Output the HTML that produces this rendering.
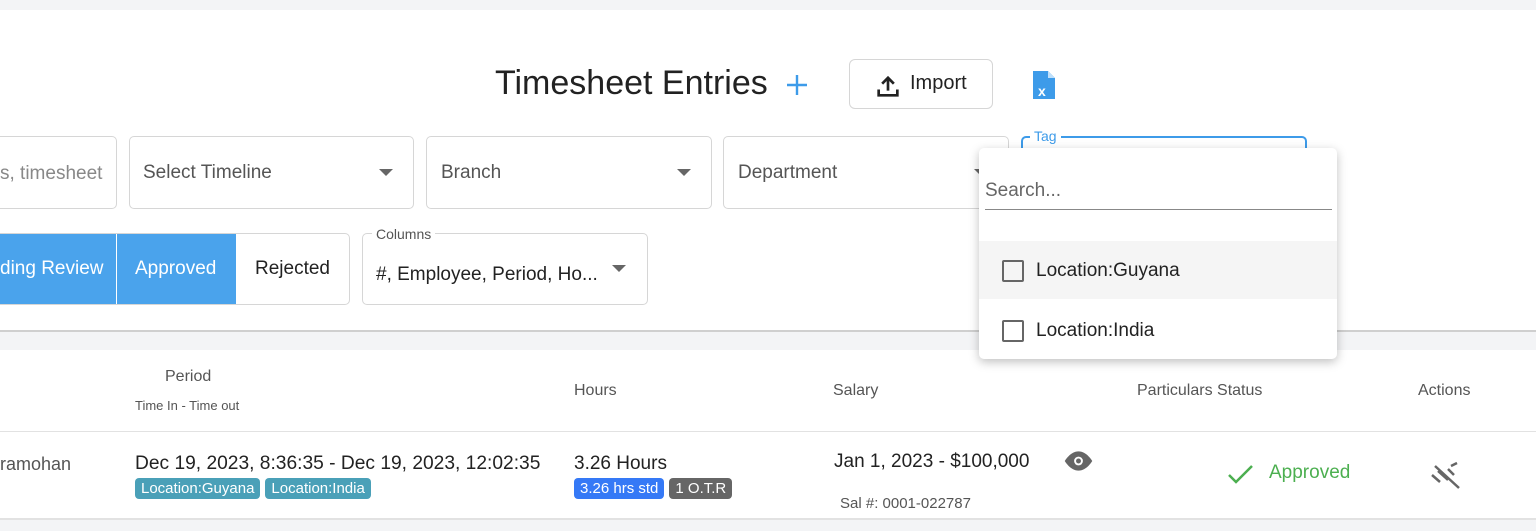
<!DOCTYPE html>
<html><head><style>
body{margin:0;width:1536px;height:531px;overflow:hidden;background:#f3f4f6;font-family:"Liberation Sans",Roboto,sans-serif;position:relative;color:#222}
.a{position:absolute}
.box{position:absolute;border:1px solid #d6d6d6;border-radius:5px;background:#fff;box-sizing:border-box}
.lbl{position:absolute;font-size:19px;color:#555}
.arr{position:absolute;width:0;height:0;border-left:7px solid transparent;border-right:7px solid transparent;border-top:7px solid #666}
.tag{display:inline-block;color:#fff;font-size:15px;padding:2px 6px;border-radius:4px;margin-right:5px}
.cb{position:absolute;left:1002px;width:18px;height:18px;border:2px solid #666;border-radius:2px}
</style></head><body>
<div class="a" style="left:0;top:10px;width:1536px;height:320px;background:#fff;border-bottom:2px solid #cfcfcf"></div>
<div class="a" style="left:0;top:350px;width:1536px;height:168px;background:#fff"></div>
<div class="a" style="left:0;top:431px;width:1536px;height:1px;background:#e2e2e2"></div>
<div class="a" style="left:0;top:518px;width:1536px;height:2px;background:#e2e2e2"></div>

<div class="a" style="left:495px;top:64px;font-size:34px;color:#222">Timesheet Entries</div>
<svg class="a" style="left:786px;top:74px" width="22" height="22" viewBox="0 0 22 22"><path d="M11 1v20M1 11h20" stroke="#3d9be9" stroke-width="2.4"/></svg>
<div class="box" style="left:849px;top:59px;width:144px;height:50px;border-radius:6px"></div>
<svg class="a" style="left:874px;top:72px" width="28" height="28" viewBox="0 0 24 24"><path d="M12 16V5M7 10l5-5 5 5M4 15v5h16v-5" fill="none" stroke="#222" stroke-width="2.3"/></svg>
<div class="a" style="left:910px;top:72px;font-size:20px">Import</div>
<svg class="a" style="left:1033px;top:71px" width="22" height="28" viewBox="0 0 22 28"><path d="M0 0h15l7 7v21H0z" fill="#3d9be9"/><path d="M15 0v7h7" fill="#bfe0fb"/><text x="5" y="25" font-size="14" font-weight="bold" fill="#fff" font-family="Liberation Sans">x</text></svg>

<div class="box" style="left:-10px;top:136px;width:127px;height:73px"></div>
<div class="lbl" style="left:0;top:163px;color:#888;width:104px;overflow:hidden;white-space:nowrap">s, timesheet</div>
<div class="box" style="left:129px;top:136px;width:285px;height:73px"></div><div class="lbl" style="left:143px;top:162px">Select Timeline</div><div class="arr" style="left:379px;top:169px"></div>
<div class="box" style="left:426px;top:136px;width:286px;height:73px"></div><div class="lbl" style="left:441px;top:162px">Branch</div><div class="arr" style="left:677px;top:169px"></div>
<div class="box" style="left:723px;top:136px;width:286px;height:73px"></div><div class="lbl" style="left:738px;top:162px">Department</div><div class="arr" style="left:974px;top:169px"></div>
<div class="box" style="left:1021px;top:136px;width:286px;height:73px;border:2px solid #3d9be9"></div>
<div class="a" style="left:1030px;top:128px;background:#fff;padding:0 4px;font-size:14px;color:#3d9be9">Tag</div>

<div class="box" style="left:-10px;top:233px;width:360px;height:72px"></div>
<div class="a" style="left:0;top:234px;width:116px;height:70px;background:#4aa3ec"></div>
<div class="a" style="left:117px;top:234px;width:119px;height:70px;background:#4aa3ec"></div>
<div class="a" style="left:0;top:258px;font-size:19px;color:#fff">ding Review</div>
<div class="a" style="left:135px;top:258px;font-size:19px;color:#fff">Approved</div>
<div class="a" style="left:255px;top:258px;font-size:19px;color:#222">Rejected</div>
<div class="box" style="left:362px;top:233px;width:286px;height:72px"></div>
<div class="a" style="left:372px;top:226px;background:#fff;padding:0 4px;font-size:14px;color:#555">Columns</div>
<div class="a" style="left:376px;top:264px;font-size:19px;color:#222">#, Employee, Period, Ho...</div>
<div class="arr" style="left:612px;top:265px"></div>

<div class="a" style="left:979px;top:148px;width:358px;height:211px;background:#fff;border-radius:5px;box-shadow:0 3px 10px rgba(0,0,0,.25)"></div>
<div class="a" style="left:985px;top:180px;font-size:19px;color:#666">Search...</div>
<div class="a" style="left:985px;top:209px;width:347px;height:1px;background:#888"></div>
<div class="a" style="left:979px;top:241px;width:358px;height:58px;background:#f5f5f5"></div>
<div class="cb" style="top:260px"></div><div class="a" style="left:1036px;top:260px;font-size:19px">Location:Guyana</div>
<div class="cb" style="top:320px"></div><div class="a" style="left:1036px;top:320px;font-size:19px">Location:India</div>

<div class="a" style="left:165px;top:368px;font-size:16px;color:#555">Period</div>
<div class="a" style="left:135px;top:398px;font-size:13px;color:#555">Time In - Time out</div>
<div class="a" style="left:574px;top:382px;font-size:16px;color:#555">Hours</div>
<div class="a" style="left:833px;top:382px;font-size:16px;color:#555">Salary</div>
<div class="a" style="left:1137px;top:382px;font-size:16px;color:#555">Particulars Status</div>
<div class="a" style="left:1418px;top:382px;font-size:16px;color:#555">Actions</div>

<div class="a" style="left:0;top:454px;font-size:18px;color:#555">ramohan</div>
<div class="a" style="left:135px;top:453px;font-size:19.2px">Dec 19, 2023, 8:36:35 - Dec 19, 2023, 12:02:35</div>
<div class="a" style="left:135px;top:478px"><span class="tag" style="background:#4aa0b8">Location:Guyana</span><span class="tag" style="background:#4aa0b8">Location:India</span></div>
<div class="a" style="left:574px;top:453px;font-size:19px">3.26 Hours</div>
<div class="a" style="left:574px;top:478px"><span class="tag" style="background:#3579f6">3.26 hrs std</span><span class="tag" style="background:#666">1 O.T.R</span></div>
<div class="a" style="left:834px;top:451px;font-size:19px">Jan 1, 2023 - $100,000</div>
<div class="a" style="left:840px;top:495px;font-size:15px;color:#555">Sal #: 0001-022787</div>
<svg class="a" style="left:1062px;top:450px" width="33" height="22" viewBox="0 0 24 16"><path d="M12 1C6 1 2 8 2 8s4 7 10 7 10-7 10-7-4-7-10-7z" fill="#666"/><circle cx="12" cy="8" r="3.2" fill="#fff"/><circle cx="12" cy="8" r="1.8" fill="#666"/></svg>
<svg class="a" style="left:1227px;top:463px" width="28" height="22" viewBox="0 0 28 22"><path d="M2 12l7 7L25 3" fill="none" stroke="#4caf50" stroke-width="2.5"/></svg>
<div class="a" style="left:1269px;top:462px;font-size:19px;color:#4caf50">Approved</div>
<svg class="a" style="left:1430px;top:461px" width="34" height="30" viewBox="0 0 34 30"><path d="M5 5l24 22M2 14l8 7M8 10l10 9M18 8l6 6M21 5l6-3" stroke="#666" stroke-width="2.5" fill="none"/></svg>
</body></html>
